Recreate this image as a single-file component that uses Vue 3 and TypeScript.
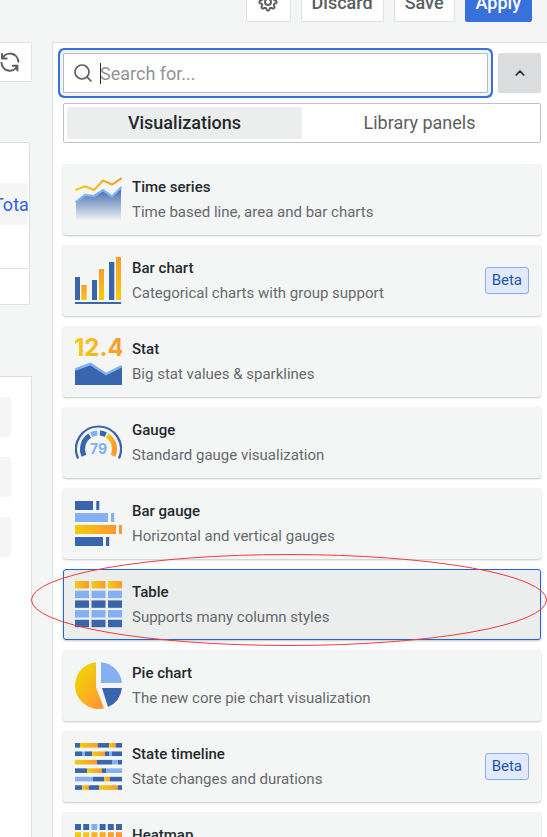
<script setup lang="ts">
import { ref } from 'vue'

interface Visualization {
  id: string
  name: string
  description: string
  beta?: boolean
}

interface Cell {
  x: number
  y: number
  w: number
  h: number
  fill: string
}

const DARK = '#3865ab'
const LIGHT = '#84aff1'
const WARM = 'url(#warm)'

const query = ref('')
const tab = ref<'visualizations' | 'library'>('visualizations')
const selected = ref('table')

const visualizations: Visualization[] = [
  { id: 'timeseries', name: 'Time series', description: 'Time based line, area and bar charts' },
  { id: 'barchart', name: 'Bar chart', description: 'Categorical charts with group support', beta: true },
  { id: 'stat', name: 'Stat', description: 'Big stat values & sparklines' },
  { id: 'gauge', name: 'Gauge', description: 'Standard gauge visualization' },
  { id: 'bargauge', name: 'Bar gauge', description: 'Horizontal and vertical gauges' },
  { id: 'table', name: 'Table', description: 'Supports many column styles' },
  { id: 'piechart', name: 'Pie chart', description: 'The new core pie chart visualization' },
  { id: 'timeline', name: 'State timeline', description: 'State changes and durations', beta: true },
  { id: 'heatmap', name: 'Heatmap', description: 'Like a histogram over time' },
]

// Closed outline of an eight-toothed cog centred in a 20x20 box.
const cogPath =
  Array.from({ length: 96 }, (_, i) => {
    const angle = (i / 96) * Math.PI * 2
    const wave = Math.cos(angle * 8)
    const radius = 7.5 + 1.1 * Math.sign(wave) * Math.sqrt(Math.abs(wave))
    const x = 10 + radius * Math.sin(angle)
    const y = 10 - radius * Math.cos(angle)
    return `${i === 0 ? 'M' : 'L'}${x.toFixed(2)} ${y.toFixed(2)}`
  }).join('') + 'z'

const tableCells: Cell[] = [WARM, LIGHT, DARK, LIGHT, DARK].flatMap((fill, row) =>
  [0, 16.5, 33].map((x) => ({ x, y: row * 9.7, w: 14, h: 7.4, fill })),
)

const timelineRows: [number, string][][] = [
  [[5, DARK], [23, WARM], [34, DARK], [41, WARM], [47, DARK]],
  [[7, DARK], [10, LIGHT], [17, DARK], [30, WARM], [34, DARK], [37, LIGHT], [47, DARK]],
  [[22, WARM], [37, DARK], [43, LIGHT], [47, DARK]],
  [[12, DARK], [27, WARM], [31, DARK], [47, LIGHT]],
  [[18, LIGHT], [29, DARK], [35, WARM], [47, DARK]],
  [[7, DARK], [14, WARM], [24, DARK], [43, WARM], [47, DARK]],
]

const timelineCells: Cell[] = timelineRows.flatMap((segments, row) =>
  segments.map(([end, fill], i) => {
    const start = i === 0 ? 0 : segments[i - 1][0]
    return { x: start, y: row * 8.45, w: end - start, h: 4.6, fill }
  }),
)

const heatColors = ['#f2cc0c', '#f5c216', '#f8b61c', '#fbab23', '#fda02a', '#ff9830']
const heatCells: Cell[] = [0, 1, 2, 3, 4, 5].flatMap((row) =>
  heatColors.map((warm, col) => ({
    x: col * 8.2,
    y: row * 8.2,
    w: 6,
    h: 6,
    fill: row % 3 === 1 ? warm : (row + col) % 6 === 2 ? LIGHT : DARK,
  })),
)

const cells: Record<string, Cell[]> = {
  table: tableCells,
  timeline: timelineCells,
  heatmap: heatCells,
}
</script>

<template>
  <div class="page">
    <header class="toolbar">
      <button class="btn icon-btn" type="button" aria-label="Panel settings">
        <svg width="20" height="20" viewBox="0 0 20 20" fill="none" stroke="currentColor" stroke-width="1.9" stroke-linejoin="round">
          <circle cx="10" cy="10" r="3" />
          <path :d="cogPath" />
        </svg>
      </button>
      <button class="btn" type="button">Discard</button>
      <button class="btn" type="button">Save</button>
      <button class="btn primary" type="button">Apply</button>
    </header>

    <div class="body">
      <div class="left">
        <button class="refresh" type="button" aria-label="Refresh">
          <svg width="20" height="20" viewBox="0 0 20 20" fill="none" stroke="currentColor" stroke-width="2" stroke-linecap="round" stroke-linejoin="round">
            <path d="M2 2v4.600h4.600M2.600 6.200A8.300 8.300 0 0 1 18.300 9.600M17.400 18.400v-4.600h-4.600M17.200 14.200A8.300 8.300 0 0 1 1.500 10.800" />
          </svg>
        </button>
        <div class="preview">
          <div class="preview-row"><a href="#total">Total</a></div>
          <div class="preview-foot"></div>
        </div>
        <div class="queries">
          <div v-for="n in 3" :key="n" class="query-row"></div>
        </div>
      </div>

      <main class="options">
        <div class="search-line">
          <div class="search" :class="{ empty: !query }">
            <svg class="lens" width="18" height="18" viewBox="0 0 18 18" fill="none" stroke="currentColor" stroke-width="1.7" stroke-linecap="round">
              <circle cx="8" cy="8" r="7" />
              <path d="M13.200 13.200 17 17" />
            </svg>
            <input v-model="query" type="text" placeholder="Search for..." aria-label="Search for a visualization" />
          </div>
          <button class="collapse" type="button" aria-label="Close visualization picker">
            <svg width="10" height="6" viewBox="0 0 10 6" fill="none" stroke="currentColor" stroke-width="1.700" stroke-linecap="round" stroke-linejoin="round">
              <path d="M1.200 5 5 1.200 8.800 5" />
            </svg>
          </button>
        </div>

        <div class="tabs">
          <button type="button" :class="{ active: tab === 'visualizations' }" @click="tab = 'visualizations'">Visualizations</button>
          <button type="button" :class="{ active: tab === 'library' }" @click="tab = 'library'">Library panels</button>
        </div>

        <div class="list">
          <div v-for="viz in visualizations" :key="viz.id" class="item">
            <button class="card" :class="{ selected: selected === viz.id }" type="button" @click="selected = viz.id">
              <svg class="viz-icon" width="47" height="47" viewBox="0 0 47 47" aria-hidden="true">
                <template v-if="viz.id === 'timeseries'">
                  <defs>
                    <linearGradient id="area" x1="0" y1="0" x2="0" y2="1">
                      <stop offset="0" stop-color="#3865ab" />
                      <stop offset="1" stop-color="#3865ab" stop-opacity="0" />
                    </linearGradient>
                    <linearGradient id="warm">
                      <stop offset="0" stop-color="#f2cc0c" />
                      <stop offset="1" stop-color="#ff9830" />
                    </linearGradient>
                    <linearGradient id="warm-up" x1="0" y1="1" x2="0" y2="0">
                      <stop offset="0" stop-color="#f2cc0c" />
                      <stop offset="1" stop-color="#ff9830" />
                    </linearGradient>
                    <linearGradient id="warm-diag" x1=".2" y1=".3" x2=".8" y2="1">
                      <stop offset="0" stop-color="#f2cc0c" />
                      <stop offset="1" stop-color="#ff9830" />
                    </linearGradient>
                  </defs>
                  <path d="M1 26 10 19l9 1 9-6 9 6.500 9-9V45H1z" fill="url(#area)" />
                  <path d="M.5 26.500 10 19l9 1 9-6 9 6.500 9.500-9.500" fill="none" stroke="#84aff1" stroke-width="2.200" />
                  <path d="M.3 14 10 10.300l9 3.700L28 4.500l9 4 9.700-6.300" fill="none" stroke="url(#warm)" stroke-width="2" />
                </template>

                <template v-else-if="viz.id === 'barchart'">
                  <path d="M0 20h5v23H0zM17 23h5v20h-5zM34 5h5.300v38H34zM0 45h46v2H0z" fill="#3865ab" />
                  <path d="M6.300 28h5.400v15H6.300z" fill="url(#warm-up)" />
                  <path d="M24 12h5v31h-5z" fill="url(#warm-up)" />
                  <path d="M41 0h5v43h-5z" fill="url(#warm-up)" />
                </template>

                <template v-else-if="viz.id === 'stat'">
                  <text x="-1" y="17.500" font-family="Inter, sans-serif" font-size="24" font-weight="700" fill="url(#warm)">12.4</text>
                  <path d="M0 32 15 26l16 10.500L47 28v19H0z" fill="#3865ab" />
                  <path d="M0 31.500 15.500 26 31 36l16-8" fill="none" stroke="#84aff1" stroke-width="2.500" />
                </template>

                <template v-else-if="viz.id === 'gauge'">
                  <g fill="none">
                    <path d="M3.100 39.500A22.500 22.500 0 1 1 43.900 39.500" stroke="#3865ab" stroke-width="2.200" />
                    <path d="M9 36.800A16 16 0 0 1 14.800 16.600M24.900 14.100A16 16 0 0 1 30.800 15.700" stroke="#3865ab" stroke-width="5" />
                    <path d="M16.200 15.700A16 16 0 0 1 22.400 14" stroke="#84aff1" stroke-width="5" />
                    <path d="M32.200 16.600A16 16 0 0 1 38 36.800" stroke="url(#warm)" stroke-width="5" />
                  </g>
                  <text x="23.500" y="35" text-anchor="middle" font-family="Inter, sans-serif" font-size="14" font-weight="700" fill="#84aff1">79</text>
                </template>

                <template v-else-if="viz.id === 'bargauge'">
                  <path d="M0 1h18v9H0zM21.300 1h3v9h-3zM0 37h28v9H0zM31 37h3.200v9H31z" fill="#3865ab" />
                  <path d="M0 13h33v9H0zM36 13h3.200v9H36z" fill="#84aff1" />
                  <path d="M0 25h41v9H0z" fill="url(#warm)" />
                  <path d="M44 25h3v9h-3z" fill="#ff9830" />
                </template>

                <template v-else-if="viz.id === 'piechart'">
                  <path d="M21 .13V25.500L29 46.350A23.500 23.500 0 1 1 21 .13z" fill="url(#warm-diag)" />
                  <path d="M26 .13A23.500 23.500 0 0 1 46.900 21H26z" fill="#84aff1" />
                  <path d="M27 26H46.900A23.500 23.500 0 0 1 33 45z" fill="#3865ab" />
                </template>

                <template v-else>
                  <rect v-for="(c, i) in cells[viz.id]" :key="i" :x="c.x" :y="c.y" :width="c.w" :height="c.h" :fill="c.fill" />
                </template>
              </svg>
              <span class="text">
                <span class="name">{{ viz.name }}</span>
                <span class="description">{{ viz.description }}</span>
              </span>
              <span v-if="viz.beta" class="badge">Beta</span>
            </button>
            <svg v-if="viz.id === 'table'" class="marker" viewBox="0 0 516 92" preserveAspectRatio="none" aria-hidden="true">
              <ellipse cx="258" cy="46" rx="257.500" ry="45.500" fill="none" stroke="#f23c3c" stroke-width="1" />
            </svg>
          </div>
        </div>
      </main>
    </div>
  </div>
</template>

<style>
body {
  margin: 0;
}
</style>

<style scoped>
.page {
  display: flex;
  flex-direction: column;
  height: 100vh;
  overflow: hidden;
  background: #f4f5f5;
  color: #24292e;
  font-family: Roboto, sans-serif;
  font-size: 18px;
}

.page *,
.page {
  box-sizing: border-box;
}

button,
input {
  font: inherit;
  color: inherit;
  margin: 0;
}

button {
  cursor: pointer;
}

.toolbar {
  flex: none;
  display: flex;
  align-items: flex-end;
  justify-content: flex-end;
  gap: 10px;
  height: 42px;
  padding: 0 15px 20px;
}

.btn {
  flex: none;
  height: 40px;
  padding: 0 10px;
  border: 1px solid #e0e1e2;
  border-radius: 2px;
  background: #fff;
  color: #5b5e63;
  font-weight: 500;
}

.icon-btn {
  display: flex;
  align-items: center;
  justify-content: center;
  width: 45px;
}

.primary {
  border-color: #3871dc;
  background: #3871dc;
  color: #fff;
}

.body {
  flex: 1;
  display: flex;
  min-height: 0;
}

.left {
  flex: none;
  display: flex;
  flex-direction: column;
  align-items: flex-start;
  width: 52px;
}

.refresh {
  display: flex;
  align-items: center;
  width: 32px;
  height: 40px;
  padding: 0;
  border: 1px solid #e0e1e2;
  border-left: 0;
  border-radius: 0 2px 2px 0;
  background: #fff;
  color: #5b5e63;
}

.preview {
  width: 30px;
  height: 163px;
  margin-top: 60px;
  padding: 40px 1px 0 0;
  border: 1px solid #e0e1e2;
  border-left: 0;
  border-radius: 0 3px 3px 0;
  background: #fff;
}

.preview-row {
  display: flex;
  width: 28px;
  height: 42px;
  align-items: center;
  overflow: hidden;
  background: #f4f5f5;
}

.preview-row a {
  margin-left: -7px;
  color: #3560dc;
  text-decoration: none;
}

.preview-foot {
  height: 44px;
  border-bottom: 1px solid #e0e1e2;
}

.queries {
  flex: 1;
  display: flex;
  flex-direction: column;
  gap: 20px;
  width: 32px;
  margin-top: 71px;
  padding-top: 20px;
  border: 1px solid #dcddde;
  border-width: 1px 1px 0 0;
  background: #fff;
}

.query-row {
  flex: none;
  width: 11px;
  height: 40px;
  border-radius: 0 3px 3px 0;
  background: #f4f5f5;
}

.options {
  flex: 1;
  min-width: 0;
  padding: 10px 6px 0 10px;
  border: 1px solid #dfe0e1;
  border-width: 1px 0 0 1px;
  background: #fff;
}

.search-line {
  display: flex;
  gap: 10px;
}

.search {
  position: relative;
  flex: 1;
  display: flex;
  align-items: center;
  gap: 8px;
  height: 40px;
  padding: 0 10px;
  border: 1px solid #b9babb;
  border-radius: 2px;
  box-shadow: 0 0 0 3px #f0f3fa, 0 0 0 5px #3871dc;
}

.search.empty::after {
  content: '';
  position: absolute;
  left: 36px;
  top: 9px;
  width: 1px;
  height: 21px;
  background: #24292e;
}

.lens {
  flex: none;
  color: #5b5e63;
}

.search input {
  flex: 1;
  min-width: 0;
  padding: 0;
  border: 0;
  outline: 0;
  background: none;
}

.search input::placeholder {
  color: #919396;
  opacity: 1;
}

.collapse {
  display: flex;
  align-items: center;
  justify-content: center;
  width: 43px;
  height: 40px;
  padding: 0;
  border: 0;
  border-radius: 2px;
  background: #dbdcde;
}

.tabs {
  display: flex;
  height: 40px;
  margin-top: 10px;
  padding: 3px;
  border: 1px solid #bfc0c1;
  border-radius: 2px;
}

.tabs button {
  flex: 1;
  padding: 0 0 2px;
  border: 0;
  border-radius: 2px;
  background: none;
  color: #5b5e63;
}

.tabs button.active {
  background: #eceded;
  color: #24292e;
  font-weight: 500;
}

.list {
  display: flex;
  flex-direction: column;
  gap: 10px;
  padding-top: 21px;
}

.item {
  position: relative;
}

.card {
  display: flex;
  align-items: center;
  gap: 10px;
  width: 100%;
  height: 71px;
  padding: 0 11px;
  border: 1px solid #f4f5f5;
  border-radius: 3px;
  background: #f4f5f5;
  box-shadow: 0 1px 2px rgba(24, 26, 27, 0.25);
  text-align: left;
}

.card.selected {
  border-color: #1f62e0;
  background: #eceded;
}

.viz-icon {
  flex: none;
}

.text {
  flex: 1;
  display: flex;
  flex-direction: column;
  min-width: 0;
  font-size: 15px;
  line-height: 25px;
}

.name {
  font-weight: 500;
}

.description {
  color: #66696e;
}

.badge {
  padding: 0 6px;
  border: 1px solid #84aff1;
  border-radius: 3px;
  background: #e1e9fa;
  color: #1f56b0;
  font-size: 15px;
  line-height: 25px;
}

.marker {
  position: absolute;
  left: -32px;
  top: -15px;
  width: calc(100% + 38px);
  height: 92px;
  pointer-events: none;
}
</style>
